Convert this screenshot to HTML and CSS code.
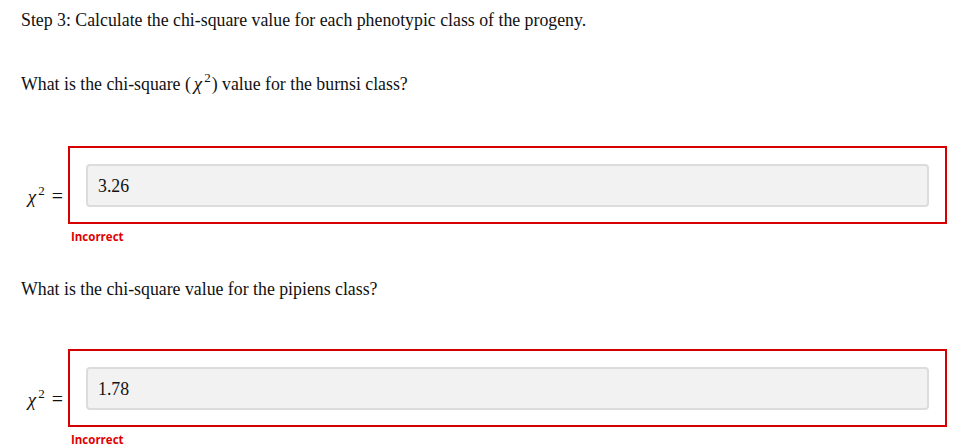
FILE: index.html
```html
<!DOCTYPE html>
<html lang="en">
<head>
<meta charset="utf-8">
<title>Step 3</title>
<link rel="stylesheet" href="styles.css">
</head>
<body>
<div class="page">
  <p class="step">Step 3: Calculate the chi-square value for each phenotypic class of the progeny.</p>

  <p class="question q-first">What is the chi-square (<span class="chi chi-inline">χ</span><sup class="sq">2</sup>) value for the burnsi class?</p>
  <div class="answer-row">
    <div class="label"><span class="chi">χ</span><sup class="lsq">2</sup><span class="eq">=</span></div>
    <div class="answer-box">
      <div class="field">3.26</div>
    </div>
  </div>
  <div class="feedback">Incorrect</div>

  <p class="question q-second">What is the chi-square value for the pipiens class?</p>
  <div class="answer-row">
    <div class="label"><span class="chi">χ</span><sup class="lsq">2</sup><span class="eq">=</span></div>
    <div class="answer-box">
      <div class="field">1.78</div>
    </div>
  </div>
  <div class="feedback">Incorrect</div>
</div>
</body>
</html>
```

FILE: styles.css
```css
html, body {
  margin: 0;
  padding: 0;
  background: #ffffff;
}

body {
  font-family: "Liberation Serif", "Times New Roman", serif;
  font-size: 17.8px;
  color: #111111;
}

.page {
  padding: 0 10px 0 21px;
}

.step,
.question {
  margin: 0;
  line-height: 20px;
}

.step {
  padding-top: 10px;
}

.q-first {
  margin-top: 44px;
}

.q-second {
  margin-top: 35px;
}

.chi {
  font-style: italic;
  font-size: 19px;
  line-height: 0;
}

.chi-inline {
  margin-left: 3px;
}

.sq {
  font-size: 13px;
  line-height: 0;
  vertical-align: 8px;
  margin-left: 2px;
  margin-right: 1px;
}

.answer-row {
  display: flex;
  align-items: flex-end;
  margin-top: 52px;
}

.q-second + .answer-row {
  margin-top: 50px;
}

.label {
  width: 42px;
  margin-right: 5px;
  display: flex;
  justify-content: flex-end;
  align-items: baseline;
  line-height: 20px;
  padding-bottom: 18px;
  white-space: nowrap;
}

.lsq {
  font-size: 13px;
  line-height: 0;
  position: relative;
  top: -8px;
  margin-left: 2px;
}

.eq {
  margin-left: 7px;
  font-size: 20px;
}

.answer-box {
  flex: 1;
  border: 2px solid #d60000;
  padding: 16px 16px 15px 16px;
}

.field {
  height: 39px;
  border: 2px solid #dcdcdc;
  border-radius: 4px;
  background: #f2f2f2;
  padding-left: 10px;
  display: flex;
  align-items: center;
  line-height: 20px;
  color: #111111;
}

.feedback {
  margin: 5px 0 0 50px;
  font-family: "Open Sans", "Liberation Sans", sans-serif;
  font-weight: 700;
  font-size: 11.5px;
  line-height: 15px;
  color: #e00000;
}
```
